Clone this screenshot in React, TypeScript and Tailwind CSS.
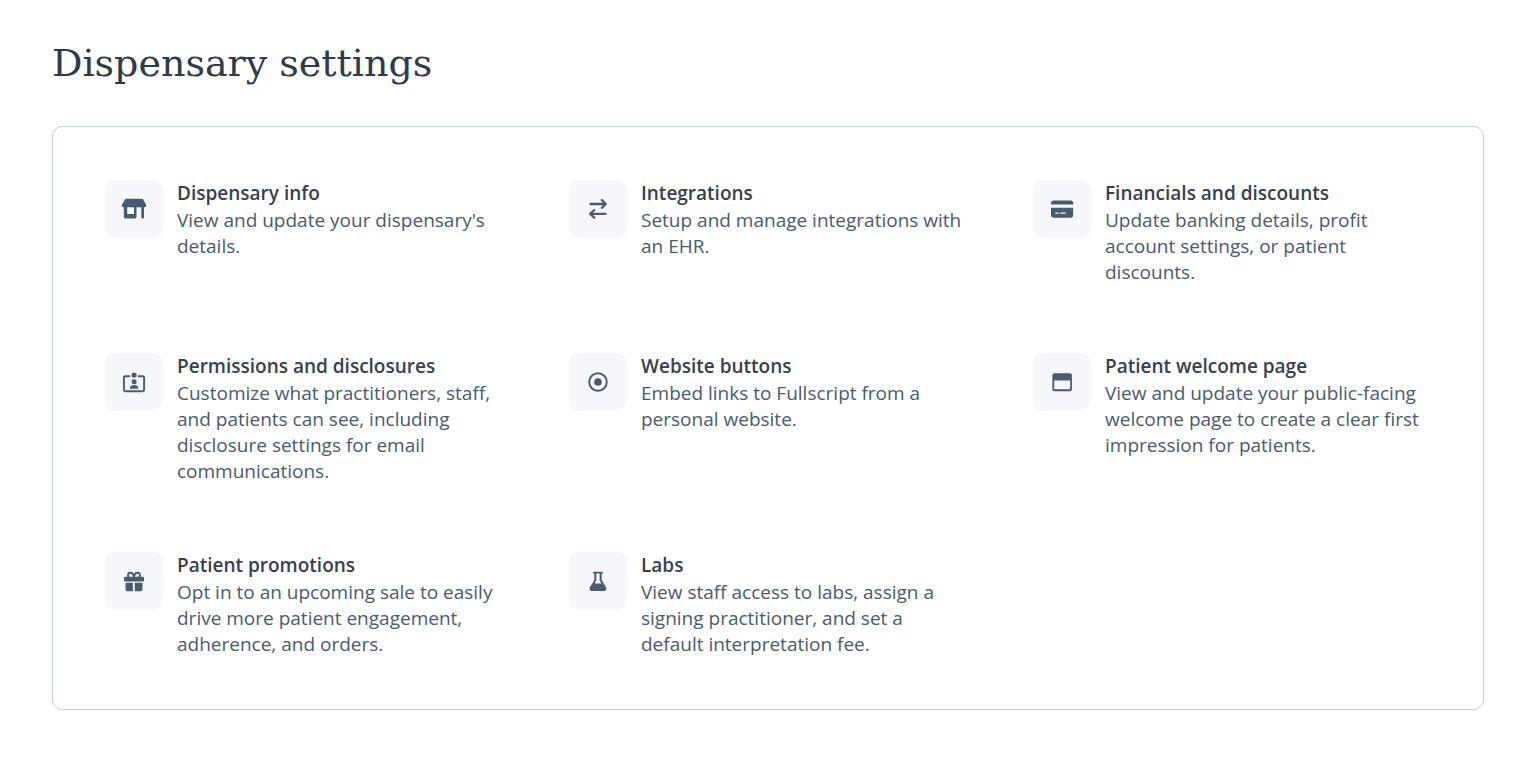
import type { ReactNode } from "react";

type Setting = {
  title: string;
  description: string;
  href: string;
  icon: ReactNode;
};

const StoreIcon = (
  <>
    <path d="M6.200 3.700h15.800c.6 0 1 .2 1.300.7l2.700 5.400c.6 1.300-.1 2.400-1.500 2.400H3.500c-1.400 0-2.100-1.100-1.500-2.400l2.900-5.400c.3-.5.7-.7 1.300-.7z" />
    <path d="M3.800 12h3.400v6.900H14V12h2.500v9.800c0 .9-.6 1.600-1.500 1.600H5.300c-.9 0-1.500-.7-1.500-1.600z" />
    <path d="M21.300 12H24v10.600c0 .5-.3.800-.8.800h-1.100c-.5 0-.8-.3-.8-.8z" />
  </>
);

const ArrowsIcon = (
  <g fill="none" stroke="currentColor" strokeWidth="2.300" strokeLinecap="round" strokeLinejoin="round">
    <path d="M6.500 9h15M17.800 5.200l4 3.800-4 3.800" />
    <path d="M21.500 18.800h-15M10.200 15l-4 3.800 4 3.800" />
  </g>
);

const CardIcon = (
  <>
    <path d="M5.500 5.400h17.300c1.300 0 2.400 1 2.400 2.400v1.800H3V7.800c0-1.400 1.100-2.400 2.500-2.400z" />
    <path
      fillRule="evenodd"
      d="M3 12.700h22.200v7.600c0 1.300-1.100 2.400-2.400 2.400H5.500c-1.400 0-2.500-1.100-2.500-2.400zM7.300 17.400v1.400h3.300v-1.400zM12.200 17.400v1.400h5.600v-1.400z"
    />
  </>
);

const BadgeIcon = (
  <>
    <path
      fill="none"
      stroke="currentColor"
      strokeWidth="1.900"
      d="M10.200 8.200H5.300c-.8 0-1.400.6-1.400 1.400v12.200c0 .8.600 1.400 1.400 1.400h17.400c.8 0 1.400-.6 1.400-1.400V9.600c0-.8-.6-1.400-1.400-1.400H18"
    />
    <rect x="11.600" y="4.700" width="5" height="4.900" rx="1.900" />
    <circle cx="14.100" cy="13.700" r="2.500" />
    <path d="M9.900 20.800v-.7c0-2 2-3.100 4.200-3.100s4.200 1.100 4.200 3.100v.7z" />
  </>
);

const RadioIcon = (
  <>
    <circle cx="14" cy="14" r="8.800" fill="none" stroke="currentColor" strokeWidth="1.900" />
    <circle cx="14" cy="14" r="3.800" />
  </>
);

const WindowIcon = (
  <path
    fillRule="evenodd"
    d="M6.500 5.200h15.300c1.200 0 2.100.9 2.100 2.100v13.700c0 1.300-.9 2.200-2.100 2.200H6.500c-1.200 0-2.100-.9-2.100-2.200V7.300c0-1.200.9-2.100 2.100-2.100zM6.200 12.500v8c0 .5.300.8.800.800h14.300c.5 0 .8-.3.800-.8v-8z"
  />
);

const GiftIcon = (
  <>
    <path
      fill="none"
      stroke="currentColor"
      strokeWidth="1.900"
      d="M14 10.700c-.2-3-1.400-5-3.500-5-1.600 0-2.500 1.100-2.500 2.500 0 1 .4 1.800 1 2.500M14 10.700c.2-3 1.400-5 3.500-5 1.600 0 2.500 1.100 2.500 2.500 0 1-.4 1.800-1 2.500"
    />
    <rect x="4" y="9.700" width="20" height="4.700" rx="1.200" />
    <path d="M5.500 15.700h7.400v8.600H7.500c-1.100 0-2-.9-2-2zM14.800 15.700h7.700v6.600c0 1.100-.9 2-2 2h-5.700z" />
  </>
);

const FlaskIcon = (
  <path
    fillRule="evenodd"
    d="M9.700 4.700h8.600c.5 0 .8.300.8.900s-.3 1-.8 1h-.6v6.400l4.300 7.300c1 1.800-.1 3.800-2.100 3.800H8.100c-2 0-3.100-2-2.100-3.800l4.300-7.300V6.600h-.6c-.5 0-.8-.4-.8-1s.3-.9.800-.9zM12.300 6.600v6.900L10.500 16.600h7l-1.800-3.100V6.600z"
  />
);

const settings: Setting[] = [
  {
    title: "Dispensary info",
    description: "View and update your dispensary's details.",
    href: "#dispensary-info",
    icon: StoreIcon,
  },
  {
    title: "Integrations",
    description: "Setup and manage integrations with an EHR.",
    href: "#integrations",
    icon: ArrowsIcon,
  },
  {
    title: "Financials and discounts",
    description: "Update banking details, profit account settings, or patient discounts.",
    href: "#financials",
    icon: CardIcon,
  },
  {
    title: "Permissions and disclosures",
    description:
      "Customize what practitioners, staff, and patients can see, including disclosure settings for email communications.",
    href: "#permissions",
    icon: BadgeIcon,
  },
  {
    title: "Website buttons",
    description: "Embed links to Fullscript from a personal website.",
    href: "#website-buttons",
    icon: RadioIcon,
  },
  {
    title: "Patient welcome page",
    description:
      "View and update your public-facing welcome page to create a clear first impression for patients.",
    href: "#welcome-page",
    icon: WindowIcon,
  },
  {
    title: "Patient promotions",
    description:
      "Opt in to an upcoming sale to easily drive more patient engagement, adherence, and orders.",
    href: "#promotions",
    icon: GiftIcon,
  },
  {
    title: "Labs",
    description:
      "View staff access to labs, assign a signing practitioner, and set a default interpretation fee.",
    href: "#labs",
    icon: FlaskIcon,
  },
];

function SettingLink({ title, description, href, icon }: Setting) {
  return (
    <a href={href} className="flex items-start gap-3.5">
      <span className="flex size-[58px] shrink-0 items-center justify-center rounded-[10px] bg-[#f5f7fb] text-[#4a5a70]">
        <svg viewBox="0 0 28 28" className="size-7" fill="currentColor" aria-hidden="true">
          {icon}
        </svg>
      </span>
      <span className="min-w-0 flex-1">
        <span className="block text-[19px] leading-[27px] font-semibold text-[#36404e]">{title}</span>
        <span className="block text-[19px] leading-[26px] text-[#4a5a70]">{description}</span>
      </span>
    </a>
  );
}

export default function App() {
  return (
    <main className="bg-white px-[52px] pt-8 pb-12 font-['Open_Sans','Noto_Sans',sans-serif]">
      <h1 className="mb-8 font-['DejaVu_Serif',serif] text-[38px] leading-[62px] text-[#2f3b4a]">
        Dispensary settings
      </h1>
      <section className="rounded-[10px] border border-[#c3cddc] px-[52px] pt-[53px] pb-[52px]">
        <div className="grid gap-x-[66px] gap-y-[68px] md:grid-cols-3">
          {settings.map((setting) => (
            <SettingLink key={setting.title} {...setting} />
          ))}
        </div>
      </section>
    </main>
  );
}
